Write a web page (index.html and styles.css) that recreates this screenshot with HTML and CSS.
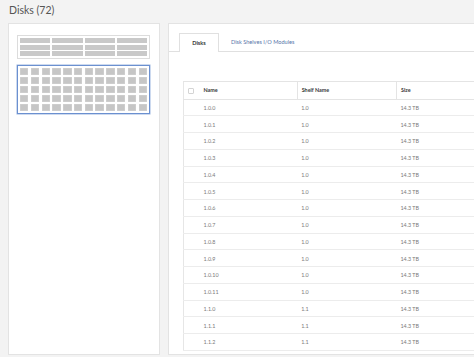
FILE: index.html
```html
<!DOCTYPE html>
<html>
<head>
<meta charset="utf-8">
<link rel="stylesheet" href="styles.css">
</head>
<body>
<div class="title">Disks (72)</div>
<div class="main">
  <aside class="left">
    <div class="shelf shelf-small">
      <i></i><i></i><i></i><i></i>
      <i></i><i></i><i></i><i></i>
      <i></i><i></i><i></i><i></i>
    </div>
    <div class="shelf shelf-big">
      <i></i><i></i><i></i><i></i><i></i><i></i><i></i><i></i><i></i><i></i><i></i><i></i>
      <i></i><i></i><i></i><i></i><i></i><i></i><i></i><i></i><i></i><i></i><i></i><i></i>
      <i></i><i></i><i></i><i></i><i></i><i></i><i></i><i></i><i></i><i></i><i></i><i></i>
      <i></i><i></i><i></i><i></i><i></i><i></i><i></i><i></i><i></i><i></i><i></i><i></i>
      <i></i><i></i><i></i><i></i><i></i><i></i><i></i><i></i><i></i><i></i><i></i><i></i>
    </div>
  </aside>
  <section class="right">
    <div class="tabs">
      <div class="tab active">Disks</div>
      <div class="tab">Disk Shelves I/O Modules</div>
    </div>
    <div class="table-wrap">
      <table class="grid">
        <colgroup>
          <col class="w-chk"><col class="w-name"><col class="w-shelf"><col class="w-size">
        </colgroup>
        <thead>
          <tr><th><span class="chk"></span></th><th>Name</th><th class="sep">Shelf Name</th><th class="sep">Size</th></tr>
        </thead>
        <tbody>
          <tr><td></td><td>1.0.0</td><td>1.0</td><td>14.3 TB</td></tr>
          <tr><td></td><td>1.0.1</td><td>1.0</td><td>14.3 TB</td></tr>
          <tr><td></td><td>1.0.2</td><td>1.0</td><td>14.3 TB</td></tr>
          <tr><td></td><td>1.0.3</td><td>1.0</td><td>14.3 TB</td></tr>
          <tr><td></td><td>1.0.4</td><td>1.0</td><td>14.3 TB</td></tr>
          <tr><td></td><td>1.0.5</td><td>1.0</td><td>14.3 TB</td></tr>
          <tr><td></td><td>1.0.6</td><td>1.0</td><td>14.3 TB</td></tr>
          <tr><td></td><td>1.0.7</td><td>1.0</td><td>14.3 TB</td></tr>
          <tr><td></td><td>1.0.8</td><td>1.0</td><td>14.3 TB</td></tr>
          <tr><td></td><td>1.0.9</td><td>1.0</td><td>14.3 TB</td></tr>
          <tr><td></td><td>1.0.10</td><td>1.0</td><td>14.3 TB</td></tr>
          <tr><td></td><td>1.0.11</td><td>1.0</td><td>14.3 TB</td></tr>
          <tr><td></td><td>1.1.0</td><td>1.1</td><td>14.3 TB</td></tr>
          <tr><td></td><td>1.1.1</td><td>1.1</td><td>14.3 TB</td></tr>
          <tr><td></td><td>1.1.2</td><td>1.1</td><td>14.3 TB</td></tr>
        </tbody>
      </table>
    </div>
  </section>
</div>
</body>
</html>
```
FILE: styles.css
```css
html, body {
  margin: 0;
  padding: 0;
}
body {
  background: #f3f3f3;
  font-family: Lato, "Open Sans", sans-serif;
  width: 474px;
  height: 357px;
  overflow: hidden;
  -webkit-font-smoothing: antialiased;
}
.title {
  height: 23px;
  box-sizing: border-box;
  padding: 3px 0 0 9px;
  font-size: 10.5px;
  color: #555;
  line-height: 14px;
}
.main {
  display: flex;
  gap: 8px;
  padding: 0 0 0 8px;
  height: 332px;
}
.left {
  width: 152px;
  box-sizing: border-box;
  background: #fff;
  border: 1px solid #e3e3e3;
  padding: 11px 0 0 8px;
  display: flex;
  flex-direction: column;
  gap: 6px;
}
.shelf {
  width: 133px;
  box-sizing: border-box;
  display: grid;
}
.shelf i {
  display: block;
  background: #c9c9c9;
}
.shelf-small {
  border: 1px solid #dcdcdc;
  padding: 2px;
  grid-template-columns: repeat(4, 1fr);
  column-gap: 2px;
  row-gap: 1.7px;
}
.shelf-small i {
  height: 5px;
}
.shelf-big {
  border: 1px solid #6b90d0;
  box-shadow: 0 0 0 0.5px #9bb4de;
  padding: 2px;
  grid-template-columns: repeat(12, 1fr);
  column-gap: 2.4px;
  row-gap: 2.3px;
}
.shelf-big i {
  height: 6.7px;
  background: #c6c6c6;
  box-shadow: inset 0 0 0 0.5px #d4d4d4;
}
.right {
  flex: 1;
  background: #fff;
  border: 1px solid #e3e3e3;
  border-right: none;
  overflow: hidden;
}
.tabs {
  display: flex;
  padding: 9px 0 0 10px;
  border-bottom: 1px solid #e0e0e0;
}
.tab {
  height: 18px;
  line-height: 18px;
  font-size: 5.6px;
  color: #5573a8;
  padding: 0 12px;
}
.tab.active {
  width: 40px;
  box-sizing: border-box;
  padding: 0;
  text-align: center;
  font-weight: bold;
  color: #333;
  border: 1px solid #e0e0e0;
  border-bottom: none;
  background: #fff;
  margin-bottom: -1px;
  height: 19px;
}
.table-wrap {
  padding: 29px 0 0 14px;
}
.grid {
  border-collapse: collapse;
  table-layout: fixed;
  width: 320px;
  font-size: 5.4px;
  color: #7a7a7a;
  border-left: 1px solid #e6e6e6;
}
.w-chk { width: 16px; }
.w-name { width: 97.7px; }
.w-shelf { width: 99.3px; }
.w-size { width: 107px; }
.grid th {
  height: 17.5px;
  box-sizing: border-box;
  text-align: left;
  font-weight: bold;
  color: #3a3a3a;
  padding: 0 0 0 4px;
  border-top: 1px solid #e4e4e4;
  border-bottom: 1px solid #e4e4e4;
  white-space: nowrap;
}
.grid th.sep {
  border-left: 1px solid #e4e4e4;
}
.grid td {
  height: 16.75px;
  box-sizing: border-box;
  padding: 1px 0 0 4px;
  border-bottom: 1px solid #ececec;
  vertical-align: middle;
  white-space: nowrap;
}
.chk {
  display: block;
  width: 6px;
  height: 6px;
  box-sizing: border-box;
  border: 1px solid #d4d4d4;
  border-radius: 1px;
  margin-top: 1px;
}
```
